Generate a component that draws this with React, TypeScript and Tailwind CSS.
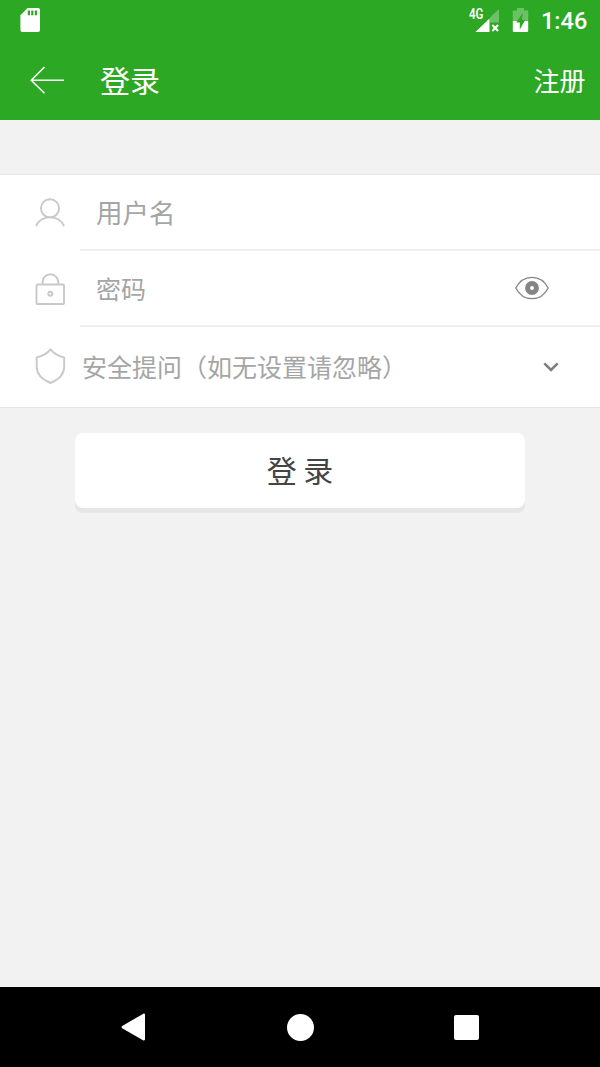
import { useState } from "react";

const cjk = "font-['Noto_Sans_CJK_SC','Noto_Sans',sans-serif]";

function StatusBar() {
  return (
    <div className="flex h-10 items-start justify-between pl-5 pr-[14px] text-white">
      <svg className="mt-2 h-6 w-5" viewBox="0 0 20 24" fill="currentColor">
        <path
          fillRule="evenodd"
          d="M7.6 0H18a2 2 0 0 1 2 2v20a2 2 0 0 1-2 2H2.4a2 2 0 0 1-2-2V7.2zM7.8 2.500v4.700h2.200V2.500zM11.200 2.500v4.700h2.200V2.500zM14.800 2.500v4.700H17V2.500z"
        />
      </svg>
      <div className="flex items-start">
        <svg className="h-10 w-[31px]" viewBox="0 0 31 40">
          <path d="M30 9v13.500h-9V17.500z" fill="#fff" fillOpacity=".3" />
          <path d="M20.500 18.500V32H6.500z" fill="#fff" />
          <path d="M23.300 25l5.800 6M29.100 25l-5.800 6" stroke="#fff" strokeWidth="2" />
          <g transform="scale(.82 1)">
            <text x="0" y="18.700" fill="#fff" className="font-[Roboto,sans-serif] text-[14px] font-semibold">
              4G
            </text>
          </g>
        </svg>
        <svg className="ml-3 mt-2 h-6 w-[17px]" viewBox="0 0 17 24">
          <path d="M5 0h7v2.500h4.200V13H.800V2.500H5z" fill="#fff" fillOpacity=".3" />
          <path d="M.800 13h15.400v10a1 1 0 0 1-1 1H1.800a1 1 0 0 1-1-1z" fill="#fff" />
          <path d="M10.800 5L4.200 14.500h3.600V21.500l5.400-9.500h-3.400z" fill="#2ca825" />
        </svg>
        <span className="ml-[12px] mt-[6px] block w-[45px] whitespace-nowrap font-[Roboto,sans-serif] text-[23.5px] font-medium leading-[30px]">
          1:46
        </span>
      </div>
    </div>
  );
}

function Header() {
  return (
    <header className="flex h-20 items-center pl-[30px] pr-[14.500px] text-white">
      <svg className="h-7 w-[35px]" viewBox="0 0 35 28" fill="none" stroke="currentColor" strokeWidth="1.500">
        <path d="M14.500 1L1.200 14.300l13.300 13M1.200 14.300H34" />
      </svg>
      <h1 className="mb-[2px] ml-[35px] text-[30px] leading-10">登录</h1>
      <button className="ml-auto text-[26px] leading-10">注册</button>
    </header>
  );
}

function UserIcon() {
  return (
    <svg className="h-9 w-8" viewBox="0 0 32 36" fill="none" stroke="#c9c9c9" strokeWidth="1.900">
      <circle cx="16" cy="13.300" r="9.100" />
      <path d="M2 31c2.500-5.500 7.500-8.600 14-8.600S27.500 25.500 30 31" />
    </svg>
  );
}

function LockIcon() {
  return (
    <svg className="h-9 w-8" viewBox="0 0 32 36" fill="none" stroke="#c9c9c9" strokeWidth="1.900">
      <rect x="2.500" y="13.500" width="27.500" height="19.500" rx="1" />
      <path d="M8.500 13.500v-2.300a7.900 7.900 0 0 1 15.800 0v2.300" />
      <circle cx="16.300" cy="22.700" r="2" />
    </svg>
  );
}

function ShieldIcon() {
  return (
    <svg className="mb-[2px] h-9 w-8" viewBox="0 0 32 36" fill="none" stroke="#c9c9c9" strokeWidth="1.900" strokeLinejoin="round">
      <path d="M16.500 1.300C13.800 4.800 8.500 8 2.700 9.500v9.200c0 7.500 5.500 12.800 13.800 16.300 8.300-3.500 13.700-8.800 13.700-16.300V9.500C24.500 8 19.200 4.800 16.500 1.300z" />
    </svg>
  );
}

function EyeIcon() {
  return (
    <svg className="h-6 w-[34px]" viewBox="0 0 34 24" fill="none">
      <path
        d="M.800 12C4.500 4.800 10 1.300 17 1.300S29.500 4.800 33.200 12C29.500 19.200 24 22.700 17 22.700S4.500 19.200.800 12z"
        stroke="#858585"
        strokeWidth="1.300"
      />
      <circle cx="17" cy="12" r="4.400" stroke="#858585" strokeWidth="5" />
    </svg>
  );
}

const inputStyle =
  "min-w-0 flex-1 bg-transparent text-[#555] outline-none placeholder:text-[#a5a5a5] placeholder:opacity-100";

export default function App() {
  const [visible, setVisible] = useState(false);
  return (
    <div className={`flex h-[1067px] w-[600px] flex-col overflow-hidden bg-[#f2f2f2] ${cjk}`}>
      <div className="h-[120px] bg-[#2ca825]">
        <StatusBar />
        <Header />
      </div>

      <main className="flex-1 pt-[54px]">
        <form onSubmit={(e) => e.preventDefault()}>
          <div className="border-y border-[#e6e6e6] bg-white">
            <div className="flex h-[76px]">
              <div className="flex w-20 items-center pl-[34px]">
                <UserIcon />
              </div>
              <div className="flex flex-1 items-center border-b-[2px] border-[#efefef] pb-[2px] pl-4">
                <input placeholder="用户名" className={`${inputStyle} h-10 text-[26.5px]`} />
              </div>
            </div>
            <div className="flex h-[76px]">
              <div className="flex w-20 items-center pl-[34px]">
                <LockIcon />
              </div>
              <div className="flex flex-1 items-center border-b-[2px] border-[#efefef] pl-4 pr-[51px]">
                <input
                  type={visible ? "text" : "password"}
                  placeholder="密码"
                  className={`${inputStyle} h-10 text-[25px]`}
                />
                <button type="button" onClick={() => setVisible(!visible)}>
                  <EyeIcon />
                </button>
              </div>
            </div>
            <div className="flex h-20 items-center pl-[34px] pr-[41px]">
              <ShieldIcon />
              <span className="mb-[2px] ml-4 text-[25px] leading-10 text-[#a5a5a5]">安全提问（如无设置请忽略）</span>
              <svg className="ml-auto h-[10px] w-4" viewBox="0 0 16 10" fill="none" stroke="#7d7d7d" strokeWidth="2.500">
                <path d="M1.300 1.300L8 8l6.700-6.700" />
              </svg>
            </div>
          </div>
          <button className="mx-auto mt-[25px] block h-[75px] w-[450px] rounded-[8px] bg-white pb-[2px] text-[30px] leading-[73px] text-[#444] shadow-[0_5px_0_#e6e6e6]">
            登 录
          </button>
        </form>
      </main>

      <nav className="flex h-20 items-center bg-black text-white">
        <div className="flex w-[200px] pl-[121px]">
          <svg className="h-7 w-6" viewBox="0 0 24 28" fill="currentColor">
            <path d="M22 .900c1-.600 2-.200 2 .900v24.500c0 1.100-1 1.500-2 .900L1.200 15.200c-.900-.600-.900-1.700 0-2.300z" />
          </svg>
        </div>
        <div className="flex w-[200px] justify-center">
          <div className="h-[27px] w-[27px] rounded-full bg-white" />
        </div>
        <div className="flex w-[200px] pl-[54px]">
          <div className="h-[25px] w-[25px] rounded-[2px] bg-white" />
        </div>
      </nav>
    </div>
  );
}
